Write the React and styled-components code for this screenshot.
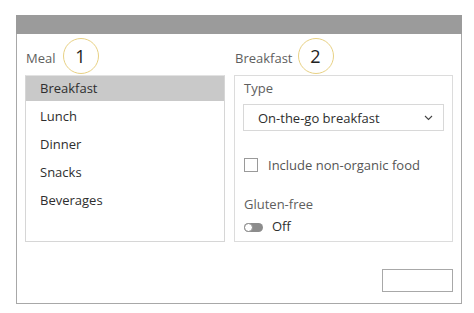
import React from "react";
import styled, { createGlobalStyle } from "styled-components";

const GlobalStyle = createGlobalStyle`
  body {
    margin: 0;
    background: #ffffff;
    font-family: "Open Sans", "Liberation Sans", sans-serif;
  }
`;

export const Frame = styled.div`
  box-sizing: border-box;
  width: 446px;
  height: 289px;
  margin: 15px 0 0 16px;
  border: 1px solid #a8a8a8;
  border-top: none;
  display: flex;
  flex-flow: column;
`;

export const TitleBar = styled.div`
  height: 19px;
  margin: 0 -1px;
  background: #9b9b9b;
`;

export const Body = styled.div`
  flex: 1;
  display: flex;
  flex-flow: column;
  padding: 4px 8px 11px 8px;
`;

export const Columns = styled.div`
  display: flex;
  gap: 9px;
`;

export const Column = styled.div`
  width: ${(p) => p.width}px;
  display: flex;
  flex-flow: column;
`;

export const LabelRow = styled.div`
  height: 37px;
  display: flex;
  align-items: flex-start;
  gap: ${(p) => p.gap}px;
`;

export const Label = styled.span`
  margin-top: 11px;
  padding-left: 1px;
  font-size: 13px;
  line-height: 18px;
  color: #5e5e5e;
`;

export const Badge = styled.div`
  box-sizing: border-box;
  width: 36px;
  height: 36px;
  border-radius: 50%;
  border: 1.5px solid #e8d184;
  display: flex;
  align-items: center;
  justify-content: center;
  font-size: 18px;
  color: #222222;
  background: #ffffff;
`;

export const ListBox = styled.div`
  box-sizing: border-box;
  height: 167px;
  border: 1px solid #d6d6d6;
  border-top-color: #e2e2e2;
`;

export const ListItem = styled.div`
  height: 25px;
  margin-bottom: 3px;
  padding-left: 14px;
  display: flex;
  align-items: center;
  font-size: 13px;
  line-height: 17px;
  padding-bottom: 1px;
  box-sizing: border-box;
  color: #2e2e2e;
  background: ${(p) => (p.selected ? "#c9c9c9" : "transparent")};
`;

export const Panel = styled.div`
  box-sizing: border-box;
  height: 167px;
  border: 1px solid #dcdcdc;
  padding: 2px 8px 0 9px;
  display: flex;
  flex-flow: column;
`;

export const FieldLabel = styled.div`
  font-size: 13px;
  line-height: 20px;
  color: #5e5e5e;
  margin-top: ${(p) => p.top || 0}px;
`;

export const Select = styled.div`
  box-sizing: border-box;
  height: 27px;
  margin: 6px 0 0 -1px;
  border: 1px solid #d8d8d8;
  padding: 0 10px 0 14px;
  display: flex;
  align-items: center;
  justify-content: space-between;
  font-size: 13px;
  color: #2e2e2e;
`;

export const CheckRow = styled.label`
  margin-top: 24px;
  height: 20px;
  display: flex;
  align-items: center;
  gap: 10px;
  font-size: 13px;
  color: #555555;
`;

export const CheckBox = styled.span`
  box-sizing: border-box;
  width: 14px;
  height: 14px;
  border: 1px solid #9a9a9a;
  background: #ffffff;
`;

export const ToggleRow = styled.div`
  margin-top: 2px;
  height: 20px;
  display: flex;
  align-items: center;
  gap: 9px;
  font-size: 13px;
  color: #2e2e2e;
`;

export const Track = styled.span`
  position: relative;
  width: 19px;
  height: 9px;
  margin-top: 2px;
  border-radius: 5px;
  background: #8c8c8c;
`;

export const Knob = styled.span`
  position: absolute;
  left: 0;
  top: 0;
  box-sizing: border-box;
  width: 9px;
  height: 9px;
  border-radius: 50%;
  border: 1px solid #8c8c8c;
  background: #ffffff;
`;

export const Footer = styled.div`
  margin-top: auto;
  display: flex;
  justify-content: flex-end;
`;

export const Button = styled.button`
  box-sizing: border-box;
  width: 71px;
  height: 23px;
  border: 1px solid #a8a8a8;
  background: #ffffff;
  padding: 0;
`;

const Chevron = () => (
  <svg width="9" height="6" viewBox="0 0 9 6">
    <polyline points="1,1 4.5,4.5 8,1" fill="none" stroke="#444" strokeWidth="1.1" />
  </svg>
);

const meals = ["Breakfast", "Lunch", "Dinner", "Snacks", "Beverages"];

const App = () => {
  return (
    <>
      <GlobalStyle />
      <Frame>
        <TitleBar />
        <Body>
          <Columns>
            <Column width={200}>
              <LabelRow gap={7}>
                <Label>Meal</Label>
                <Badge>1</Badge>
              </LabelRow>
              <ListBox>
                {meals.map((m, i) => (
                  <ListItem key={m} selected={i === 0}>
                    {m}
                  </ListItem>
                ))}
              </ListBox>
            </Column>
            <Column width={219}>
              <LabelRow gap={5}>
                <Label>Breakfast</Label>
                <Badge>2</Badge>
              </LabelRow>
              <Panel>
                <FieldLabel>Type</FieldLabel>
                <Select>
                  <span>On-the-go breakfast</span>
                  <Chevron />
                </Select>
                <CheckRow>
                  <CheckBox />
                  Include non-organic food
                </CheckRow>
                <FieldLabel top={19}>Gluten-free</FieldLabel>
                <ToggleRow>
                  <Track>
                    <Knob />
                  </Track>
                  Off
                </ToggleRow>
              </Panel>
            </Column>
          </Columns>
          <Footer>
            <Button />
          </Footer>
        </Body>
      </Frame>
    </>
  );
};

export default App;
